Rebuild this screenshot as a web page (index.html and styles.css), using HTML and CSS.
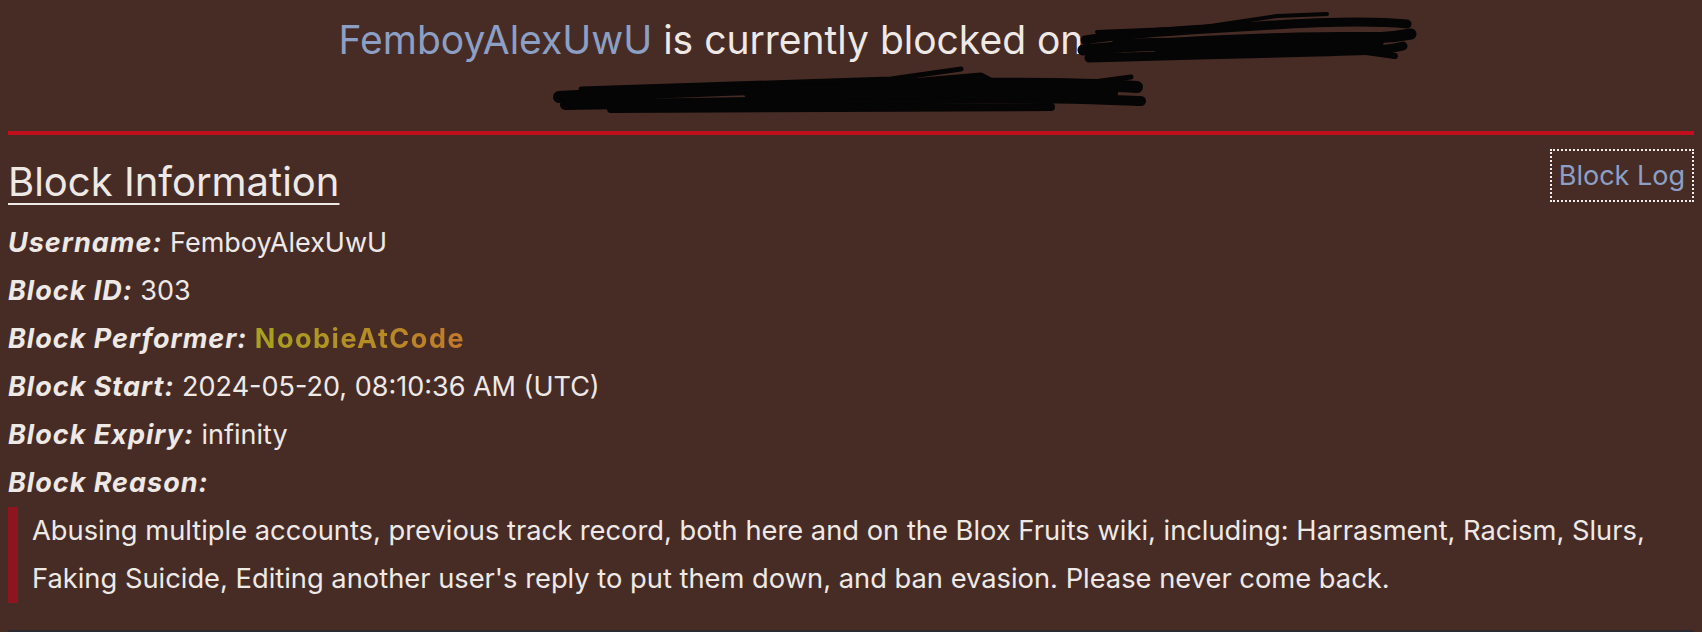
FILE: index.html
```html
<!DOCTYPE html>
<html lang="en">

<head>
    <meta charset="UTF-8">
    <meta name="viewport" content="width=device-width, initial-scale=1.0">
    <title>Block Information</title>
    <link rel="stylesheet" href="styles.css">
</head>

<body>
<div class="page">
    <h1 class="block-title">
        <a class="user-link" href="#">FemboyAlexUwU</a> is currently blocked on<svg class="redact redact-one" viewBox="0 0 340 56" aria-hidden="true">
            <g fill="none" stroke="#050505" stroke-linecap="round" stroke-linejoin="round">
                <path d="M8 30 C60 22 120 20 180 16 S 290 10 330 14" stroke-width="9"/>
                <path d="M6 40 C70 34 150 30 220 28 S 300 30 334 24" stroke-width="11"/>
                <path d="M12 48 C80 46 170 44 240 42 S 310 40 326 36" stroke-width="9"/>
                <path d="M20 22 L120 18 L200 6 L250 4" stroke-width="4"/>
                <path d="M40 36 C120 30 200 40 300 34" stroke-width="13"/>
                <path d="M80 44 L180 36 L260 38 L318 46" stroke-width="6"/>
            </g>
        </svg><br><svg class="redact redact-two" viewBox="0 0 600 52" aria-hidden="true">
            <g fill="none" stroke="#050505" stroke-linecap="round" stroke-linejoin="round">
                <path d="M8 34 C100 30 220 24 330 22 S 520 20 586 24" stroke-width="12"/>
                <path d="M14 42 C120 40 260 38 380 36 S 540 36 590 38" stroke-width="10"/>
                <path d="M30 26 C140 22 250 18 340 16 L 410 6" stroke-width="5"/>
                <path d="M360 18 L430 12 L460 28 L520 22 L580 14" stroke-width="5"/>
                <path d="M60 46 C200 44 360 46 500 44" stroke-width="8"/>
                <path d="M200 30 C300 26 420 30 560 30" stroke-width="14"/>
            </g>
        </svg>
    </h1>

    <div class="info">
        <a class="log-btn" href="#">Block Log</a>
        <h2 class="info-title">Block Information</h2>

        <div class="row"><b>Username:</b> FemboyAlexUwU</div>
        <div class="row"><b>Block ID:</b> 303</div>
        <div class="row"><b>Block Performer:</b> <span class="performer">NoobieAtCode</span></div>
        <div class="row"><b>Block Start:</b> 2024-05-20, 08:10:36 AM (UTC)</div>
        <div class="row"><b>Block Expiry:</b> infinity</div>
        <div class="row"><b>Block Reason:</b></div>
        <blockquote class="reason">
            Abusing multiple accounts, previous track record, both here and on the Blox Fruits wiki, including: Harrasment, Racism, Slurs, Faking Suicide, Editing another user's reply to put them down, and ban evasion. Please never come back.
        </blockquote>
    </div>
</div>
</body>

</html>
```

FILE: styles.css
```css
html {
    background-color: #472c26;
}

body {
    margin: 0 8px;
    font-family: "Inter", "Noto Sans", sans-serif;
    color: #efe9e6;
}

.page {
    height: 630px;
    border-bottom: 2px solid #2b2a30;
}

.block-title {
    margin: 0;
    padding-top: 14px;
    height: 117px;
    text-align: center;
    font-size: 39px;
    font-weight: 400;
    line-height: 52px;
    border-bottom: 4px solid #c0101e;
}

.user-link {
    color: #8ca0c6;
    text-decoration: none;
}

.redact {
    display: inline-block;
    vertical-align: middle;
}

.redact-one {
    width: 340px;
    height: 56px;
    margin: -10px -54px 0 -6px;
}

.redact-two {
    width: 600px;
    height: 52px;
    margin-top: -14px;
}

.info {
    padding-top: 14px;
}

.log-btn {
    float: right;
    padding: 8px 7px;
    border: 2px dotted #f2eeee;
    color: #8ca0c6;
    font-size: 27px;
    line-height: 33px;
    text-decoration: none;
}

.info-title {
    margin: 9px 0 13px;
    font-size: 40px;
    font-weight: 400;
    line-height: 48px;
    text-decoration: underline;
    text-decoration-thickness: 2px;
    text-underline-offset: 7px;
}

.row {
    font-size: 27px;
    line-height: 48px;
}

.row b {
    font-style: italic;
    font-weight: 700;
    letter-spacing: 1px;
}

.performer {
    font-weight: 700;
    letter-spacing: 1.5px;
    background: linear-gradient(90deg, #a6a21e, #c27a2a);
    -webkit-background-clip: text;
    background-clip: text;
    color: transparent;
}

.reason {
    margin: 0 40px 0 0;
    padding-left: 14px;
    border-left: 10px solid #8c1520;
    font-size: 27.3px;
    line-height: 48px;
}
```
